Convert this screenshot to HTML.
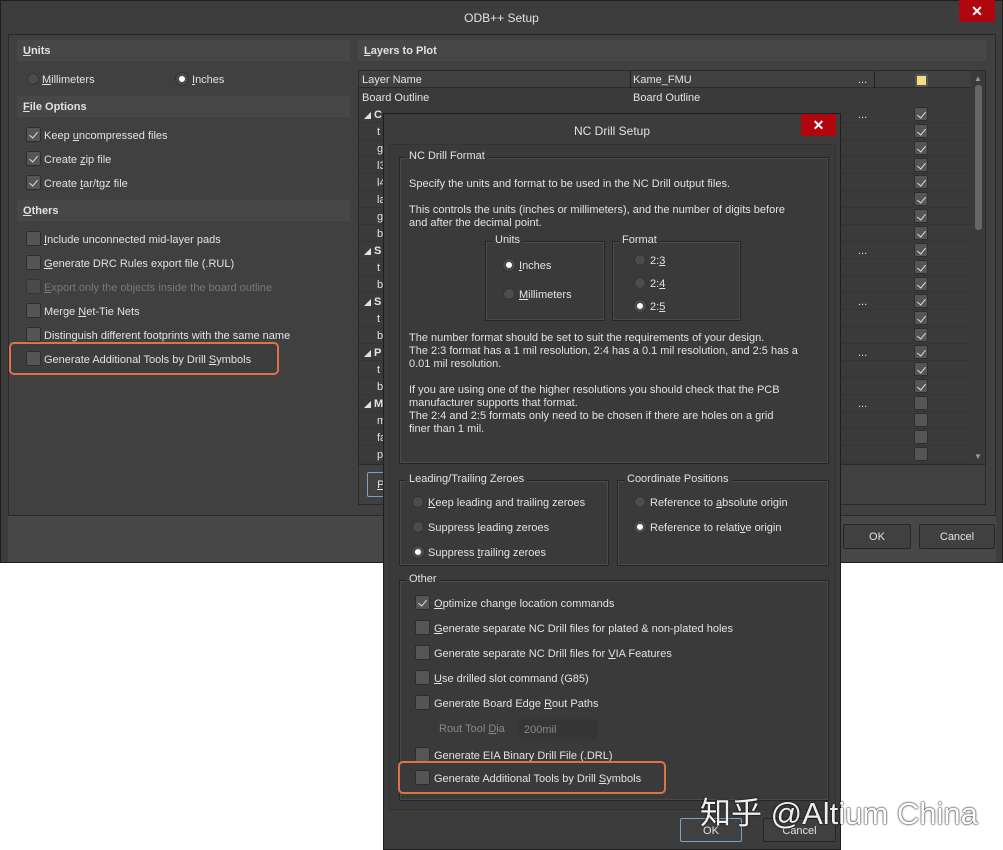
<!DOCTYPE html>
<html><head><meta charset="utf-8"><style>
*{box-sizing:border-box;margin:0;padding:0}
body{width:1003px;height:850px;background:#fff;position:relative;overflow:hidden;font-family:"Liberation Sans","Noto Sans CJK SC",sans-serif;font-size:11px;color:#e2e2e2}
.a{position:absolute}
.cb{position:absolute;width:15px;height:15px;background:#555;border:1px solid #2e2e2e;border-radius:2px}
.cb.on::after{content:"";position:absolute;left:4px;top:2px;width:4px;height:7px;border:solid #ddd;border-width:0 1px 1px 0;transform:rotate(40deg)}
.rd{position:absolute;width:12px;height:12px;border-radius:50%;background:#4c4c4c;border:1px solid #333}
.rd.on{background:#fff;border:3px solid #4a4a4a;box-shadow:0 0 0 1px #333}
.t{position:absolute;white-space:nowrap;margin-top:2px}
.gb{position:absolute;border:1px solid #262626;box-shadow:inset 0 0 0 1px #4a4a4a}
.lg{position:absolute;background:#3a3a3a;padding:0 3px;top:-8px;left:6px;white-space:nowrap}
.hd{position:absolute;background:#474747;height:21px;font-weight:bold;padding:5px 6px}
.btn{position:absolute;border:1px solid #262626;background:#404040;text-align:center;line-height:24px;border-radius:2px}
</style></head><body>
<div class="a" style="left:0;top:0;width:1003px;height:563px;background:#3d3d3d;border:1px solid #1e1e1e"></div>
<div class="t" style="left:0;width:1003px;top:9px;text-align:center;font-size:12px">ODB++ Setup</div>
<div class="a" style="left:959px;top:0;width:36px;height:22px;background:#b0070e;color:#fff;text-align:center;font-weight:bold;font-size:14px;line-height:22px">✕</div>
<div class="a" style="left:8px;top:34px;width:988px;height:482px;background:#404040;border:1px solid #2a2a2a"></div>
<div class="a" style="left:8px;top:516px;width:988px;height:46px;background:#474747"></div>
<div class="hd" style="left:17px;top:40px;width:333px"><u>U</u>nits</div>
<div class="rd" style="left:27px;top:73px"></div><div class="t" style="left:42px;top:72px"><u>M</u>illimeters</div>
<div class="rd on" style="left:176px;top:73px"></div><div class="t" style="left:192px;top:72px"><u>I</u>nches</div>
<div class="hd" style="left:17px;top:96px;width:333px"><u>F</u>ile Options</div>
<div class="cb on" style="left:26px;top:127px"></div><div class="t" style="left:44px;top:128px">Keep <u>u</u>ncompressed files</div>
<div class="cb on" style="left:26px;top:151px"></div><div class="t" style="left:44px;top:152px">Create <u>z</u>ip file</div>
<div class="cb on" style="left:26px;top:175px"></div><div class="t" style="left:44px;top:176px">Create <u>t</u>ar/tgz file</div>
<div class="hd" style="left:17px;top:200px;width:333px"><u>O</u>thers</div>
<div class="cb" style="left:26px;top:231px"></div><div class="t" style="left:44px;top:232px"><u>I</u>nclude unconnected mid-layer pads</div>
<div class="cb" style="left:26px;top:255px"></div><div class="t" style="left:44px;top:256px"><u>G</u>enerate DRC Rules export file (.RUL)</div>
<div class="cb" style="left:26px;top:279px;opacity:.5"></div><div class="t" style="left:44px;top:280px;color:#777"><u>E</u>xport only the objects inside the board outline</div>
<div class="cb" style="left:26px;top:303px"></div><div class="t" style="left:44px;top:304px">Merge <u>N</u>et-Tie Nets</div>
<div class="cb" style="left:26px;top:327px"></div><div class="t" style="left:44px;top:328px">Distinguish different footprints with the same name</div>
<div class="a" style="left:9px;top:342px;width:270px;height:33px;border:2px solid #e0714d;border-radius:5px;background:#3d3d3d"></div>
<div class="cb" style="left:26px;top:351px"></div><div class="t" style="left:44px;top:352px">Generate Additional Tools by Drill <u>S</u>ymbols</div>
<div class="hd" style="left:358px;top:40px;width:628px"><u>L</u>ayers to Plot</div>
<div class="a" style="left:358px;top:70px;width:628px;height:395px;background:#3a3a3a;border:1px solid #2a2a2a"></div>
<div class="a" style="left:359px;top:71px;width:612px;height:17px;background:#404040;border-bottom:1px solid #2a2a2a"></div>
<div class="t" style="left:362px;top:72px">Layer Name</div>
<div class="a" style="left:630px;top:71px;width:1px;height:17px;background:#222"></div>
<div class="t" style="left:633px;top:72px">Kame_FMU</div>
<div class="t" style="left:858px;top:72px">...</div>
<div class="a" style="left:874px;top:71px;width:1px;height:17px;background:#222"></div>
<div class="a" style="left:915px;top:74px;width:13px;height:13px;background:#f0df80;border:2px solid #555;border-radius:2px"></div>
<div class="t" style="left:362px;top:90px">Board Outline</div>
<div class="t" style="left:633px;top:90px">Board Outline</div>
<div class="a" style="left:972px;top:71px;width:13px;height:393px;background:#3a3a3a"></div>
<div class="a" style="left:975px;top:85px;width:7px;height:145px;background:#666;border-radius:3px"></div>
<div class="t" style="left:974px;top:72px;font-size:8px;color:#999">▲</div>
<div class="t" style="left:974px;top:450px;font-size:8px;color:#999">▼</div>
<div id="rows"></div>
<div class="a" style="left:358px;top:465px;width:628px;height:40px;border:1px solid #2a2a2a;border-top:none"></div>
<div class="btn" style="left:367px;top:472px;width:30px;height:25px;border-color:#7fa0c0"><u>Pl</u></div>
<div class="btn" style="left:843px;top:524px;width:68px;height:25px">OK</div>
<div class="btn" style="left:919px;top:524px;width:76px;height:25px">Cancel</div>
<div class="a" style="left:383px;top:113px;width:458px;height:737px;background:#3c3c3c;border:1px solid #1e1e1e"></div>
<div class="t" style="left:383px;width:458px;top:122px;text-align:center;font-size:12px">NC Drill Setup</div>
<div class="a" style="left:801px;top:114px;width:35px;height:22px;background:#b0070e;color:#fff;text-align:center;font-weight:bold;font-size:14px;line-height:22px">✕</div>
<div class="a" style="left:389px;top:144px;width:447px;height:666px;background:#3a3a3a;border:1px solid #333"></div>
<div class="gb" style="left:399px;top:157px;width:430px;height:307px"><div class="lg">NC Drill Format</div></div>
<div class="t" style="left:409px;top:176px;line-height:13px">Specify the units and format to be used in the NC Drill output files.<br><br>This controls the units (inches or millimeters), and the number of digits before<br>and after the decimal point.</div>
<div class="gb" style="left:485px;top:241px;width:120px;height:80px"><div class="lg">Units</div></div>
<div class="rd on" style="left:503px;top:259px"></div><div class="t" style="left:519px;top:258px"><u>I</u>nches</div>
<div class="rd" style="left:503px;top:288px"></div><div class="t" style="left:519px;top:287px"><u>M</u>illimeters</div>
<div class="gb" style="left:612px;top:241px;width:129px;height:80px"><div class="lg">Format</div></div>
<div class="rd" style="left:634px;top:254px"></div><div class="t" style="left:650px;top:253px">2:<u>3</u></div>
<div class="rd" style="left:634px;top:277px"></div><div class="t" style="left:650px;top:276px">2:<u>4</u></div>
<div class="rd on" style="left:634px;top:300px"></div><div class="t" style="left:650px;top:299px">2:<u>5</u></div>
<div class="t" style="left:409px;top:330px;line-height:13px">The number format should be set to suit the requirements of your design.<br>The 2:3 format has a 1 mil resolution, 2:4 has a 0.1 mil resolution, and 2:5 has a<br>0.01 mil resolution.<br><br>If you are using one of the higher resolutions you should check that the PCB<br>manufacturer supports that format.<br>The 2:4 and 2:5 formats only need to be chosen if there are holes on a grid<br>finer than 1 mil.</div>
<div class="gb" style="left:399px;top:480px;width:210px;height:86px"><div class="lg">Leading/Trailing Zeroes</div></div>
<div class="rd" style="left:412px;top:496px"></div><div class="t" style="left:428px;top:495px"><u>K</u>eep leading and trailing zeroes</div>
<div class="rd" style="left:412px;top:521px"></div><div class="t" style="left:428px;top:520px">Suppress <u>l</u>eading zeroes</div>
<div class="rd on" style="left:412px;top:546px"></div><div class="t" style="left:428px;top:545px">Suppress <u>t</u>railing zeroes</div>
<div class="gb" style="left:617px;top:480px;width:212px;height:86px"><div class="lg">Coordinate Positions</div></div>
<div class="rd" style="left:634px;top:496px"></div><div class="t" style="left:650px;top:495px">Reference to <u>a</u>bsolute origin</div>
<div class="rd on" style="left:634px;top:521px"></div><div class="t" style="left:650px;top:520px">Reference to relati<u>v</u>e origin</div>
<div class="gb" style="left:399px;top:580px;width:430px;height:221px"><div class="lg">Other</div></div>
<div class="cb on" style="left:415px;top:595px"></div><div class="t" style="left:434px;top:596px"><u>O</u>ptimize change location commands</div>
<div class="cb" style="left:415px;top:620px"></div><div class="t" style="left:434px;top:621px"><u>G</u>enerate separate NC Drill files for plated &amp; non-plated holes</div>
<div class="cb" style="left:415px;top:645px"></div><div class="t" style="left:434px;top:646px">Generate separate NC Drill files for <u>V</u>IA Features</div>
<div class="cb" style="left:415px;top:670px"></div><div class="t" style="left:434px;top:671px"><u>U</u>se drilled slot command (G85)</div>
<div class="cb" style="left:415px;top:695px"></div><div class="t" style="left:434px;top:696px">Generate Board Edge <u>R</u>out Paths</div>
<div class="t" style="left:439px;top:721px;color:#888">Rout Tool <u>D</u>ia</div>
<div class="a" style="left:518px;top:719px;width:79px;height:20px;background:#363636;color:#888;padding:5px 6px">200mil</div>
<div class="cb" style="left:415px;top:747px"></div><div class="t" style="left:434px;top:748px">Generate EIA Binary Drill File (.DRL)</div>
<div class="a" style="left:398px;top:761px;width:268px;height:33px;border:2px solid #e0714d;border-radius:5px;background:#3a3a3a"></div>
<div class="cb" style="left:415px;top:770px"></div><div class="t" style="left:434px;top:771px">Generate Additional Tools by Drill <u>S</u>ymbols</div>
<div class="btn" style="left:680px;top:818px;width:62px;height:24px;border-color:#7fa0c0">OK</div>
<div class="btn" style="left:763px;top:818px;width:73px;height:24px">Cancel</div>
<div class="t" style="left:700px;top:786px;font-size:31px;color:#fff;text-shadow:0 0 2px #000,0 0 1px #000;opacity:.92">知乎 @Altium China</div>
<script>
var r=document.getElementById('rows'),h='';
var labels=['▲ C','t','g','l3','l4','la','g','b','▲ S','t','b','▲ S','t','b','▲ P','t','b','▲ M','m','fa','p'];
for(var i=0;i<21;i++){var y=106+i*17;
h+='<div class="a" style="left:359px;top:'+(y+16)+'px;width:612px;height:1px;background:#353535"></div>';
var L=labels[i];var bold=L[0]=='▲';
h+='<div class="t" style="left:'+(bold?364:377)+'px;top:'+(y+1)+'px;'+(bold?'font-weight:bold':'')+'">'+(bold?'<span style="font-size:7px">◢</span> '+L.slice(2):L)+'</div>';
if(i==0||i==8||i==11||i==14||i==17)h+='<div class="t" style="left:858px;top:'+(y+1)+'px">...</div>';
h+='<div class="cb'+(i<17?' on':'')+'" style="left:914px;top:'+(y+1)+'px;width:14px;height:14px"></div>';}
r.innerHTML=h;
</script>
</body></html>
